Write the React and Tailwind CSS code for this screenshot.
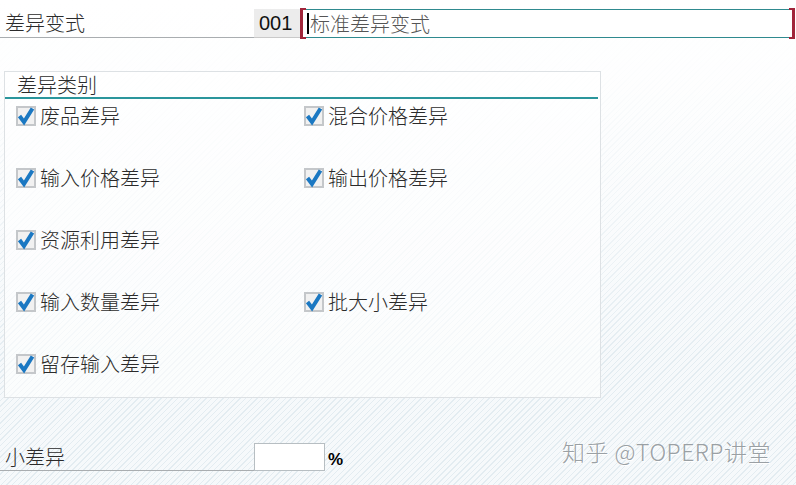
import React from "react";

const cjk = { fontFamily: '"Noto Sans CJK SC", "Liberation Sans", sans-serif' };

const leftItems = ["废品差异", "输入价格差异", "资源利用差异", "输入数量差异", "留存输入差异"];
const rightItems = ["混合价格差异", "输出价格差异", null, "批大小差异", null];

const CheckBox = () => (
    <span className="relative w-[20px] h-[20px] shrink-0 bg-[#f1f1f1] border-2 border-[#c4c7ca]">
        <svg viewBox="0 0 20 20" className="absolute left-[-2px] top-[-2px] w-[20px] h-[20px]">
            <path d="M3.5 10 L8 16 L16.5 2.5" fill="none" stroke="#1b78c2" strokeWidth="4" strokeLinejoin="miter" />
        </svg>
    </span>
);

const CheckItem = ({ label }) => (
    <div className="flex items-center h-[20px]">
        <CheckBox />
        <span className="ml-[4px] text-[20px] leading-none font-light text-[#2b2b2b]">{label}</span>
    </div>
);

const App = () => {
    return (
        <div
            className="relative w-[796px] h-[485px] overflow-hidden bg-[linear-gradient(to_bottom,#ffffff_0%,rgba(255,255,255,0.9)_15%,rgba(255,255,255,0)_75%),repeating-linear-gradient(135deg,#f6f9fb_0px,#f6f9fb_3px,#e3ecf1_3px,#e3ecf1_4px)]"
            style={cjk}
        >
            {/* Header row */}
            <div className="flex items-stretch mt-[9px] h-[29px]">
                <div className="w-[254px] border-b border-[#a9adb0] pl-[5px] flex items-center text-[20px] leading-none font-light text-[#2b2b2b]">
                    差异变式
                </div>
                <div
                    className="w-[46px] bg-[#ececec] border-b border-[#c9c9c9] flex items-center pl-[5px] text-[20px] text-[#111]"
                    style={{ fontFamily: '"Liberation Sans", sans-serif' }}
                >
                    001
                </div>
                <div className="relative w-[495px] border border-[#2f8a8f] bg-white flex items-center pl-[6px] text-[20px] leading-none font-light text-[#555]">
                    <span className="w-[2px] h-[21px] bg-black mr-[1px]" />
                    标准差异变式
                    {/* corner marks */}
                    <span className="absolute left-[-1px] top-[-2px] w-[6px] h-[31px] border-l-[3px] border-t-[2px] border-b-[2px] border-[#a1253a]" />
                    <span className="absolute right-[-1px] top-[-2px] w-[6px] h-[31px] border-r-[3px] border-t-[2px] border-b-[2px] border-[#a1253a]" />
                </div>
            </div>

            {/* Group box */}
            <div className="ml-[4px] mt-[33px] w-[597px] h-[327px] border border-[#dde1e4] bg-white/60">
                <div className="pl-[12px] pt-[3px] h-[25px] text-[20px] leading-[20px] font-light text-[#2b2b2b]">差异类别</div>
                <div className="h-[2px] bg-[#2a969c] mr-[2px]" />
                <div className="grid grid-cols-[288px_1fr] gap-y-[42px] pl-[11px] pt-[7px]">
                    {leftItems.map((l, i) => (
                        <React.Fragment key={i}>
                            <CheckItem label={l} />
                            {rightItems[i] ? <CheckItem label={rightItems[i]} /> : <div className="h-[20px]" />}
                        </React.Fragment>
                    ))}
                </div>
            </div>

            {/* Bottom row */}
            <div className="flex items-stretch mt-[45px] h-[28px]">
                <div className="w-[254px] border-b border-[#a9adb0] pl-[5px] flex items-end pb-[3px] text-[20px] leading-none font-light text-[#2b2b2b]">
                    小差异
                </div>
                <div className="w-[71px] border border-[#b7bec2] bg-white" />
                <div
                    className="ml-[3px] flex items-end pb-[3px] text-[17px] font-bold leading-none text-black"
                    style={{ fontFamily: '"Liberation Sans Narrow", "Liberation Sans", sans-serif' }}
                >
                    %
                </div>
            </div>

            {/* Watermark */}
            <div className="absolute left-[562px] top-[440px] text-[23px] leading-none font-light text-[#9aa0a4] tracking-[0.5px] [text-shadow:1px_1px_0_#ffffff]">
                知乎 @TOPERP讲堂
            </div>
        </div>
    );
};

export default App;
